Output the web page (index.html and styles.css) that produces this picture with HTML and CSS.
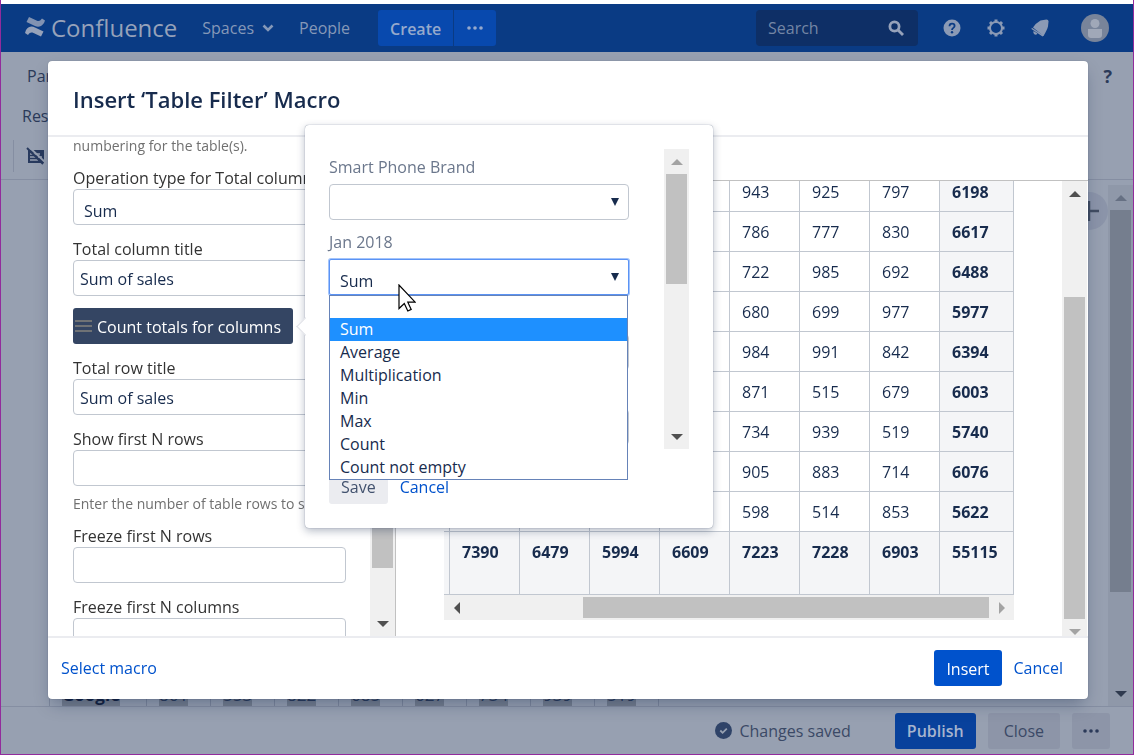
FILE: index.html
```html
<!DOCTYPE html>
<html lang="en">
  <head>
    <meta charset="utf-8">
    <title>Insert Table Filter Macro - Confluence</title>
    <link rel="stylesheet" href="styles.css">
  </head>
  <body>
    <div class="page">
      <header class="topbar">
        <a class="logo" href="#">
          <svg width="20" height="20" viewBox="0 0 20 20" fill="currentColor">
            <path d="M1 13C4 9 7 9 10 10.500L18.500 14.500L16 19.500L8.500 16C6 15 5 15.500 3 18L0 16Z"/>
            <path d="M19 6C16 10 13 10.500 10 9L1.500 5L4 0L11.500 3.500C14 4.600 15 4 17 1.500L20 3.500Z" opacity="0.85"/>
          </svg>
          <span>Confluence</span>
        </a>
        <a class="nav-link" href="#">Spaces
          <svg width="12" height="8" viewBox="0 0 12 8" fill="none" stroke="currentColor" stroke-width="2.600"><path d="M1.500 1.500L6 6L10.500 1.500"/></svg>
        </a>
        <a class="nav-link people" href="#">People</a>
        <div class="create-group">
          <button class="create">Create</button>
          <button class="create-more" aria-label="More">
            <svg width="18" height="4" viewBox="0 0 18 4" fill="currentColor"><circle cx="3" cy="2" r="1.800"/><circle cx="9" cy="2" r="1.800"/><circle cx="15" cy="2" r="1.800"/></svg>
          </button>
        </div>
        <div class="search">
          <input type="text" placeholder="Search" aria-label="Search">
          <svg width="16" height="16" viewBox="0 0 16 16" fill="none" stroke="currentColor" stroke-width="2.800"><circle cx="6.500" cy="6.500" r="4.600"/><path d="M10 10L15 15"/></svg>
        </div>
        <nav class="tools">
          <button class="tool" aria-label="Help">
            <svg width="18" height="18" viewBox="0 0 18 18"><circle cx="9" cy="9" r="8.500" fill="currentColor"/><path d="M6.500 7.200C6.500 3.800 11.600 4 11.600 7C11.600 9 9 8.800 9 11" fill="none" stroke="#0a3b84" stroke-width="1.800"/><circle cx="9" cy="13.200" r="1.200" fill="#0a3b84"/></svg>
          </button>
          <button class="tool" aria-label="Settings">
            <svg width="18" height="18" viewBox="0 0 18 18" fill="none" stroke="currentColor"><circle cx="9" cy="9" r="6" stroke-width="2"/><path stroke-width="3" d="M9 0.500V3M9 15V17.500M0.500 9H3M15 9H17.500M3 3L4.700 4.700M13.300 13.300L15 15M3 15L4.700 13.300M13.300 4.700L15 3"/></svg>
          </button>
          <button class="tool" aria-label="Notifications">
            <svg width="18" height="18" viewBox="0 0 18 18" fill="currentColor"><path d="M9.500 1.500L15.500 0.500Q17.500 0.500 17.500 2.500L17 7.500Q16 11 12.500 17L2 8.500Q5 4 9.500 1.500Z"/><path d="M0.800 8.800L12.800 16.600L11.500 17.500L0.500 10Z"/><path d="M2.500 12L6.500 14.500Q5 16.500 3.300 15.300Q1.800 14 2.500 12Z"/></svg>
          </button>
          <button class="avatar" aria-label="Profile">
            <svg width="28" height="28" viewBox="0 0 28 28"><circle cx="14" cy="14" r="14" fill="#78849a"/><circle cx="14" cy="9.500" r="4.500" fill="#a0a8b8"/><path d="M7 15H21V21Q21 24 18 24H10Q7 24 7 21Z" fill="#a0a8b8"/></svg>
          </button>
        </nav>
      </header>

      <div class="editor-head">
        <div class="crumbs">
          <span>Par</span>
          <span class="help-mark">?</span>
        </div>
        <div class="restrictions">Res</div>
        <div class="editor-tools">
          <svg width="19" height="18" viewBox="0 0 19 18"><path d="M2 3H18V16H2Z" fill="#283a5e"/><path d="M4 7H14M4 10H10M12 10H16M4 13H12" stroke="#97a0b1" stroke-width="1.500"/><path d="M3 0L19 15" stroke="#97a0b1" stroke-width="2"/><path d="M1 1L17 17" stroke="#283a5e" stroke-width="2"/></svg>
        </div>
      </div>

      <div class="editor-main">
        <div class="canvas">
          <table class="draft">
            <tr>
              <th><mark>Google</mark></th>
              <td><mark>861</mark></td>
              <td><mark>553</mark></td>
              <td><mark>822</mark></td>
              <td><mark>685</mark></td>
              <td><mark>627</mark></td>
              <td><mark>734</mark></td>
              <td><mark>939</mark></td>
              <td><mark>519</mark></td>
            </tr>
          </table>
          <button class="add" aria-label="Add">
            <svg width="20" height="20" viewBox="0 0 20 20" stroke="#414c62" stroke-width="2.500"><path d="M10 0V20M0 10H20"/></svg>
          </button>
        </div>
        <div class="scrollbar page-scroll">
          <span class="arrow up"></span>
          <div class="track"><div class="thumb"></div></div>
          <span class="arrow down"></span>
        </div>
      </div>

      <footer class="statusbar">
        <svg width="17" height="17" viewBox="0 0 17 17"><circle cx="8.500" cy="8.500" r="8.500" fill="#2f4368"/><path d="M5.300 8.500L7.600 10.800L11.800 6.600" fill="none" stroke="#97a0b1" stroke-width="1.800"/></svg>
        <span class="saved">Changes saved</span>
        <button class="publish">Publish</button>
        <button class="muted">Close</button>
        <button class="muted more" aria-label="More">
          <svg width="18" height="4" viewBox="0 0 18 4" fill="currentColor"><circle cx="3" cy="2" r="1.800"/><circle cx="9" cy="2" r="1.800"/><circle cx="15" cy="2" r="1.800"/></svg>
        </button>
      </footer>
    </div>

    <div class="dialog" role="dialog" aria-labelledby="dialog-title">
      <div class="dialog-header">
        <h1 id="dialog-title">Insert ‘Table Filter’ Macro</h1>
      </div>

      <div class="dialog-body">
        <div class="params">
          <form class="param-list">
            <p class="hint">numbering for the table(s).</p>
            <label for="operation">Operation type for Total column</label>
            <select id="operation" class="field"><option>Sum</option></select>
            <label for="column-title">Total column title</label>
            <input id="column-title" class="field" type="text" value="Sum of sales">
            <button type="button" class="totals">
              <svg width="17" height="14" viewBox="0 0 17 14" stroke="#6f7275" stroke-width="2"><path d="M0 1H17M0 6H17M0 11H17"/></svg>
              Count totals for columns
            </button>
            <label for="row-title">Total row title</label>
            <input id="row-title" class="field" type="text" value="Sum of sales">
            <label for="first-rows">Show first N rows</label>
            <input id="first-rows" class="field" type="text">
            <p class="hint">Enter the number of table rows to show</p>
            <label for="freeze-rows">Freeze first N rows</label>
            <input id="freeze-rows" class="field" type="text">
            <label for="freeze-columns">Freeze first N columns</label>
            <input id="freeze-columns" class="field" type="text">
          </form>
          <div class="scrollbar params-scroll">
            <span class="arrow up"></span>
            <div class="track"><div class="thumb"></div></div>
            <span class="arrow down"></span>
          </div>
        </div>

        <div class="preview">
          <div class="preview-content">
            <div class="table-wrap">
              <table class="sales">
                <tr><td></td><td></td><td></td><td></td><td></td><td>943</td><td>925</td><td>797</td><th>6198</th></tr>
                <tr><td></td><td></td><td></td><td></td><td></td><td>786</td><td>777</td><td>830</td><th>6617</th></tr>
                <tr><td></td><td></td><td></td><td></td><td></td><td>722</td><td>985</td><td>692</td><th>6488</th></tr>
                <tr><td></td><td></td><td></td><td></td><td></td><td>680</td><td>699</td><td>977</td><th>5977</th></tr>
                <tr><td></td><td></td><td></td><td></td><td></td><td>984</td><td>991</td><td>842</td><th>6394</th></tr>
                <tr><td></td><td></td><td></td><td></td><td></td><td>871</td><td>515</td><td>679</td><th>6003</th></tr>
                <tr><td></td><td></td><td></td><td></td><td></td><td>734</td><td>939</td><td>519</td><th>5740</th></tr>
                <tr><td></td><td></td><td></td><td></td><td></td><td>905</td><td>883</td><td>714</td><th>6076</th></tr>
                <tr><td></td><td></td><td></td><td></td><td></td><td>598</td><td>514</td><td>853</td><th>5622</th></tr>
                <tr class="total"><th></th><th>7390</th><th>6479</th><th>5994</th><th>6609</th><th>7223</th><th>7228</th><th>6903</th><th>55115</th></tr>
              </table>
            </div>
            <div class="scrollbar horizontal">
              <span class="arrow left"></span>
              <div class="track"><div class="thumb"></div></div>
              <span class="arrow right"></span>
            </div>
          </div>
          <div class="scrollbar preview-scroll">
            <span class="arrow up"></span>
            <div class="track"><div class="thumb"></div></div>
            <span class="arrow down"></span>
          </div>
        </div>
      </div>

      <div class="dialog-footer">
        <a href="#">Select macro</a>
        <button class="insert">Insert</button>
        <a href="#">Cancel</a>
      </div>

      <div class="popover">
        <div class="popover-scroll">
          <form class="columns">
            <div class="column">
              <label for="brand">Smart Phone Brand</label>
              <select id="brand" class="field"><option></option></select>
            </div>
            <div class="column">
              <label for="jan">Jan 2018</label>
              <select id="jan" class="field active"><option>Sum</option></select>
              <ul class="options">
                <li class="blank"></li>
                <li class="selected">Sum</li>
                <li>Average</li>
                <li>Multiplication</li>
                <li>Min</li>
                <li>Max</li>
                <li>Count</li>
                <li>Count not empty</li>
              </ul>
              <svg class="cursor" width="18" height="28" viewBox="0 0 18 28" fill="#fff" stroke="#000" stroke-width="1.200"><path d="M1 1V24.500L6.300 19.500L9.800 27L13.200 25.400L9.800 18.200H17.200Z"/></svg>
            </div>
            <div class="column covered">
              <select class="field" aria-label="Feb 2018"></select>
            </div>
            <div class="column covered">
              <select class="field" aria-label="Mar 2018"></select>
            </div>
          </form>
          <div class="scrollbar popover-bar">
            <span class="arrow up"></span>
            <div class="track"><div class="thumb"></div></div>
            <span class="arrow down"></span>
          </div>
        </div>
        <div class="popover-actions">
          <button class="save">Save</button>
          <a href="#">Cancel</a>
        </div>
      </div>
    </div>
  </body>
</html>
```
FILE: styles.css
```css
* {
  box-sizing: border-box;
}

body {
  margin: 0;
  font-family: "Open Sans", "Noto Sans", sans-serif;
  font-size: 16px;
  line-height: 23px;
  color: #172b4d;
}

button,
input,
select {
  font: inherit;
  color: inherit;
  margin: 0;
  border: none;
}

button {
  height: 36px;
  padding: 2px 12px 0;
  border-radius: 3px;
  cursor: pointer;
}

a {
  color: #0052cc;
  text-decoration: none;
}

svg {
  display: block;
  flex: none;
}

/* page behind the dialog */
.page {
  display: flex;
  flex-direction: column;
  height: 100vh;
  padding-top: 4px;
  border: 1px solid #922b9c;
  border-top: none;
  overflow: hidden;
}

.topbar {
  display: flex;
  align-items: center;
  flex: none;
  height: 48px;
  padding: 0 24px;
  background: #0a3b84;
  color: #96a2ba;
}

.logo {
  display: flex;
  align-items: center;
  gap: 6px;
  padding-bottom: 2px;
  color: #96a2ba;
  font-size: 24px;
}

.nav-link {
  display: flex;
  align-items: center;
  gap: 8px;
  margin-left: 25px;
  color: #8598b8;
}

.create-group {
  display: flex;
  gap: 1px;
  margin-left: 28px;
}

.create,
.create-more {
  background: #0849ae;
  color: #96a9cc;
}

.create {
  font-weight: 600;
  border-radius: 3px 0 0 3px;
}

.create-more {
  padding-top: 0;
  border-radius: 0 3px 3px 0;
}

.search {
  display: flex;
  align-items: center;
  width: 162px;
  height: 36px;
  margin-left: auto;
  padding: 0 14px 0 12px;
  border-radius: 4px;
  background: #0e2f66;
}

.search input {
  flex: 1;
  min-width: 0;
  padding: 0;
  background: none;
}

.search input::placeholder {
  color: #7486a5;
}

.tools {
  display: flex;
  align-items: center;
  gap: 26px;
  margin-left: 25px;
}

.tool,
.avatar {
  height: auto;
  padding: 0;
  background: none;
  color: #8b9ab5;
}

.avatar {
  margin-left: 6px;
}

.editor-head {
  flex: none;
  height: 128px;
  border-bottom: 1px solid #858ea2;
  background: #97a0b1;
  color: #2b3a59;
}

.crumbs {
  display: flex;
  justify-content: space-between;
  padding: 13px 21px 0 26px;
}

.help-mark {
  font-size: 18px;
  font-weight: 700;
}

.restrictions {
  padding: 17px 21px 0;
}

.editor-tools {
  margin: 12px 12px 0;
  padding: 7px 12px;
  border-left: 1px solid #858ea2;
}

.editor-main {
  display: flex;
  flex: 1;
  min-height: 0;
  background: #97a0b1;
}

.canvas {
  display: flex;
  flex: 1;
  align-items: flex-end;
  justify-content: space-between;
  padding-left: 48px;
  overflow: hidden;
}

.draft {
  border-collapse: collapse;
}

.draft th,
.draft td {
  width: 64px;
  padding: 8px 12px 0;
  border: 1px solid #7e889c;
  border-bottom: none;
  text-align: left;
  font-size: 17px;
  color: #2b3a59;
}

.draft th {
  width: 97px;
  color: #14223f;
}

.draft mark {
  background: #757e8e;
  color: inherit;
}

.add {
  display: flex;
  align-self: flex-start;
  align-items: center;
  justify-content: center;
  width: 38px;
  height: 38px;
  margin-top: 12px;
  padding: 0;
  border-radius: 50%;
  background: #8b94a9;
}

.statusbar {
  display: flex;
  align-items: center;
  justify-content: flex-end;
  flex: none;
  height: 48px;
  padding-right: 23px;
  border-top: 1px solid #858ea2;
  background: #97a0b1;
  color: #3b4966;
}

.saved {
  margin: 0 44px 0 7px;
  padding-top: 2px;
}

.publish {
  background: #08419c;
  color: #a6b4ce;
  font-weight: 600;
}

.muted {
  margin-left: 12px;
  padding: 2px 16px 0;
  background: #8d95a8;
}

.more {
  padding: 0 10px;
  color: #2b3a59;
}

/* drawn scrollbars */
.scrollbar {
  display: flex;
  flex-direction: column;
  flex: none;
  width: 25px;
  background: #f0f0f0;
}

.track {
  display: flex;
  flex-direction: column;
  flex: 1;
  min-height: 0;
  padding: 0 2px;
}

.thumb {
  background: #c1c1c1;
}

.arrow {
  display: flex;
  align-items: center;
  justify-content: center;
  flex: none;
  width: 25px;
  height: 25px;
  color: #505050;
}

.arrow::before {
  content: "";
  border: 6px solid transparent;
}

.up::before {
  border-top: none;
  border-bottom-color: currentColor;
}

.down::before {
  border-bottom: none;
  border-top-color: currentColor;
}

.left::before {
  border-left: none;
  border-right-color: currentColor;
}

.right::before {
  border-right: none;
  border-left-color: currentColor;
}

.page-scroll {
  margin-top: 5px;
  background: #8f98a9;
}

.page-scroll .thumb {
  height: 81%;
  background: #757e8e;
}

.page-scroll .up {
  color: #667083;
}

.page-scroll .down {
  color: #2f3a4f;
}

.params-scroll .track {
  justify-content: flex-end;
  padding-bottom: 43px;
}

.params-scroll .thumb {
  height: 40%;
}

.preview-scroll {
  margin-bottom: -8px;
}

.preview-scroll .thumb {
  height: 78%;
  margin-top: auto;
}

.preview-scroll .down,
.horizontal .right,
.popover-bar .up {
  color: #a3a3a3;
}

.popover-bar .thumb {
  height: 44%;
}

.horizontal {
  flex-direction: row;
  width: auto;
  height: 25px;
}

.horizontal .track {
  flex-direction: row;
  padding: 2px 0;
}

.horizontal .thumb {
  width: 78%;
  margin-left: auto;
}

/* macro dialog */
.dialog {
  position: fixed;
  top: 61px;
  right: 46px;
  bottom: 56px;
  left: 48px;
  display: flex;
  flex-direction: column;
  border-radius: 4px;
  background: #fff;
  box-shadow: 0 0 1px rgba(9, 30, 66, 0.5), 0 8px 16px -4px rgba(9, 30, 66, 0.35);
}

.dialog-header {
  display: flex;
  align-items: center;
  flex: none;
  height: 76px;
  padding: 2px 25px 0;
  border-bottom: 2px solid #ebecf0;
}

h1 {
  margin: 0;
  font-size: 22px;
  font-weight: 600;
}

.dialog-body {
  display: flex;
  flex: 1;
  min-height: 0;
  overflow: hidden;
}

.params {
  display: flex;
  flex: none;
  width: 348px;
  border-right: 1px solid #c1c1c1;
}

.param-list {
  flex: 1;
  min-width: 0;
  padding: 0 24px 0 25px;
  overflow: hidden;
}

.param-list label {
  display: block;
  margin-top: 14px;
  line-height: 21px;
  color: #333;
  white-space: nowrap;
}

.hint {
  margin: 0;
  font-size: 14px;
  line-height: 17px;
  color: #707070;
  white-space: nowrap;
}

.field + .hint {
  margin-top: 9px;
}

.field {
  display: block;
  width: 100%;
  height: 36px;
  padding: 2px 6px 0;
  border: 1px solid #c1c7d0;
  border-radius: 4px;
  background: #fff;
}

select.field {
  appearance: none;
  padding: 8px 10px 0;
  background: #fff url("data:image/svg+xml,%3Csvg xmlns='http://www.w3.org/2000/svg' width='8' height='8'%3E%3Cpath d='M0 0H8L4 8Z' fill='%23172b4d'/%3E%3C/svg%3E") no-repeat right 9px center;
}

.totals {
  display: flex;
  align-items: center;
  gap: 5px;
  margin-top: 12px;
  padding: 2px 12px 0 2px;
  background: #344563;
  color: #fff;
  white-space: nowrap;
}

.preview {
  display: flex;
  flex: 1;
  min-width: 0;
  margin-top: 43px;
  padding-right: 1px;
  border-top: 1px solid #c1c1c1;
}

.preview-content {
  display: flex;
  flex-direction: column;
  justify-content: flex-end;
  flex: 1;
  min-width: 0;
  padding: 0 48px 16px;
  overflow: hidden;
}

.table-wrap {
  display: flex;
  flex: none;
  justify-content: flex-end;
  overflow: hidden;
}

.sales {
  flex: none;
  width: 635px;
  table-layout: fixed;
  border-collapse: collapse;
}

.sales th,
.sales td {
  width: 70px;
  height: 40px;
  padding: 9px 12px 7px;
  border: 1px solid #c1c7d0;
  text-align: left;
  vertical-align: top;
}

.sales th {
  background: #f4f5f7;
  font-weight: 700;
}

.sales th:last-child {
  width: 74px;
}

.sales .total th {
  height: 63px;
}

.dialog-footer {
  display: flex;
  align-items: center;
  gap: 12px;
  flex: none;
  height: 63px;
  padding: 0 25px 1px 13px;
  border-top: 2px solid #ebecf0;
}

.insert {
  margin-left: auto;
  background: #0052cc;
  color: #fff;
  font-weight: 500;
}

/* column totals popover */
.popover {
  position: absolute;
  top: 64px;
  left: 257px;
  width: 408px;
  padding: 24px;
  border-radius: 4px;
  background: #fff;
  box-shadow: 0 0 1px rgba(9, 30, 66, 0.6), 0 3px 8px rgba(9, 30, 66, 0.3);
}

.popover::before {
  content: "";
  position: absolute;
  top: 195px;
  left: -6px;
  width: 12px;
  height: 12px;
  border: 1px solid #dfe1e6;
  border-top: none;
  border-right: none;
  background: #fff;
  transform: rotate(45deg);
}

.popover-scroll {
  display: flex;
  justify-content: space-between;
}

.columns {
  display: flex;
  flex-direction: column;
  gap: 10px;
  width: 300px;
  height: 300px;
  padding-top: 6px;
}

.column {
  position: relative;
}

.column label {
  display: block;
  margin-bottom: 5px;
  line-height: 24px;
  color: #6b778c;
}

.covered {
  padding-top: 29px;
}

.active {
  border-color: #5b93f5;
  border-radius: 2px;
  box-shadow: 0 0 0 1px #a3c4fb;
}

.options {
  position: absolute;
  z-index: 1;
  top: 65px;
  left: 0;
  width: 299px;
  margin: 0;
  padding: 0;
  border: 1px solid #6683b8;
  background: #fff;
  list-style: none;
}

.options li {
  height: 23px;
  padding: 0 10px;
}

.options .blank {
  height: 22px;
}

.options .selected {
  background: #1e90ff;
  color: #fff;
}

.cursor {
  position: absolute;
  z-index: 2;
  top: 54px;
  left: 69px;
}

.popover-actions {
  display: flex;
  align-items: center;
  gap: 12px;
  margin-top: 19px;
}

.popover-actions a {
  padding-top: 2px;
}

.save {
  background: #ebecf0;
  color: #42526e;
}
```
